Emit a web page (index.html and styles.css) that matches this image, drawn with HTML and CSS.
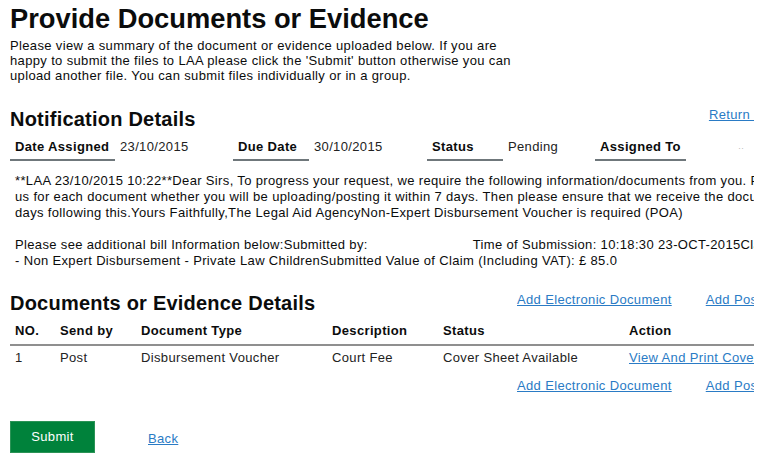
FILE: index.html
```html
<!DOCTYPE html>
<html lang="en">
<head>
  <meta charset="UTF-8">
  <meta name="viewport" content="width=device-width, initial-scale=1.0">
  <title>Provide Documents or Evidence</title>
  <link rel="stylesheet" href="styles.css">
</head>
<body>
  <div class="page">
    <h1>Provide Documents or Evidence</h1>
    <p class="intro">Please view a summary of the document or evidence uploaded below. If you are happy to submit the files to LAA please click the 'Submit' button otherwise you can upload another file. You can submit files individually or in a group.</p>

    <div class="section-head">
      <h2>Notification Details</h2>
      <a href="#" class="return-link">Return&nbsp;</a>
    </div>

    <div class="details">
      <div class="label label-date">Date Assigned</div>
      <div class="value value-wide">23/10/2015</div>
      <div class="label label-short">Due Date</div>
      <div class="value value-wide">30/10/2015</div>
      <div class="label label-short">Status</div>
      <div class="value value-mid">Pending</div>
      <div class="label label-assigned">Assigned To</div>
      <div class="value value-hidden">..</div>
    </div>

    <div class="message">
      **LAA 23/10/2015 10:22**Dear Sirs, To progress your request, we require the following information/documents from you. Please confirm to<br>
      us for each document whether you will be uploading/posting it within 7 days. Then please ensure that we receive the documents within 7<br>
      days following this.Yours Faithfully,The Legal Aid AgencyNon-Expert Disbursement Voucher is required (POA)<br>
      <br>
      Please see additional bill Information below:Submitted by:<span class="blank"></span>Time of Submission: 10:18:30 23-OCT-2015Claim Type<br>
      - Non Expert Disbursement - Private Law ChildrenSubmitted Value of Claim (Including VAT): £ 85.0
    </div>

    <div class="section-head docs-head">
      <h2 class="docs-title">Documents or Evidence Details</h2>
      <div class="doc-links">
        <a href="#">Add Electronic Document</a>
        <a href="#">Add Postal Document</a>
      </div>
    </div>

    <table class="docs">
      <colgroup>
        <col class="c-no">
        <col class="c-send">
        <col class="c-type">
        <col class="c-desc">
        <col class="c-status">
        <col class="c-action">
      </colgroup>
      <thead>
        <tr>
          <th>NO.</th>
          <th>Send by</th>
          <th>Document Type</th>
          <th>Description</th>
          <th>Status</th>
          <th>Action</th>
        </tr>
      </thead>
      <tbody>
        <tr>
          <td>1</td>
          <td>Post</td>
          <td>Disbursement Voucher</td>
          <td>Court Fee</td>
          <td>Cover Sheet Available</td>
          <td><a href="#">View And Print Cover Sheet</a></td>
        </tr>
      </tbody>
    </table>

    <div class="doc-links doc-links-bottom">
      <a href="#">Add Electronic Document</a>
      <a href="#">Add Postal Document</a>
    </div>

    <div class="actions">
      <button class="submit-btn">Submit</button>
      <a href="#" class="back-link">Back</a>
    </div>
  </div>
</body>
</html>
```

FILE: styles.css
```css
body {
  font-family: "Liberation Sans", Arial, sans-serif;
  font-size: 13px;
  line-height: 15px;
  letter-spacing: 0.35px;
  color: #0b0c0c;
  background: #fff;
  margin: 0;
  padding: 3px 10px 0;
}
.page {
  width: 744px;
  overflow: hidden;
}
a {
  color: #2a7bc5;
  text-decoration: underline;
}
h1 {
  font-size: 27.3px;
  line-height: 32px;
  font-weight: bold;
  letter-spacing: 0;
  margin: 0;
}
.intro {
  width: 512px;
  margin: 3px 0 0;
}
.section-head {
  display: flex;
  justify-content: space-between;
  align-items: flex-start;
  margin-top: 24px;
}
h2 {
  font-size: 20px;
  line-height: 24px;
  font-weight: bold;
  letter-spacing: 0.22px;
  margin: 0;
}
/* Notification details row */
.details {
  display: flex;
  align-items: flex-start;
  margin-top: 8px;
  white-space: nowrap;
}
.label {
  font-weight: bold;
  padding: 0 5px 5px;
  border-bottom: 2px solid #6f777b;
}
.label-date { width: 95px; }
.label-short { width: 66px; }
.label-assigned { width: 81px; }
.value {
  padding-left: 5px;
  color: #222;
}
.value-wide { width: 113px; }
.value-mid { width: 87px; }
.value-hidden {
  flex: 1;
  text-align: right;
  padding-right: 10px;
  color: #bbb;
  font-size: 9px;
}
.message {
  margin-top: 12px;
  padding-left: 5px;
  line-height: 16px;
  white-space: nowrap;
}
.blank {
  display: inline-block;
  width: 105px;
}
.docs-head {
  margin-top: 22px;
  justify-content: flex-start;
}
.docs-title {
  flex: 0 0 507px;
}
.doc-links {
  display: flex;
  gap: 34px;
  white-space: nowrap;
}
.docs-head .doc-links {
  margin-top: 1px;
}
.doc-links-bottom {
  padding-left: 507px;
  margin-top: 7px;
}
/* Documents table */
.docs {
  width: 820px;
  table-layout: fixed;
  border-collapse: collapse;
}
.c-no { width: 45px; }
.c-send { width: 81px; }
.c-type { width: 191px; }
.c-desc { width: 111px; }
.c-status { width: 186px; }
.c-action { width: 206px; }
.docs th {
  text-align: left;
  font-weight: bold;
  padding: 8px 5px 6px;
  border-bottom: 2px solid #8f8f8f;
  white-space: nowrap;
}
.docs td {
  padding: 4px 5px 6px;
  white-space: nowrap;
  color: #222;
}
.actions {
  display: flex;
  align-items: center;
  margin-top: 28px;
}
.submit-btn {
  width: 85px;
  height: 32px;
  background: #00823b;
  color: #fff;
  font-family: inherit;
  font-size: 13px;
  letter-spacing: 0.35px;
  border: 1px solid #2b9356;
  padding: 0 0 2px;
  cursor: pointer;
}
.back-link {
  margin-left: 53px;
  margin-top: 2px;
}
```
